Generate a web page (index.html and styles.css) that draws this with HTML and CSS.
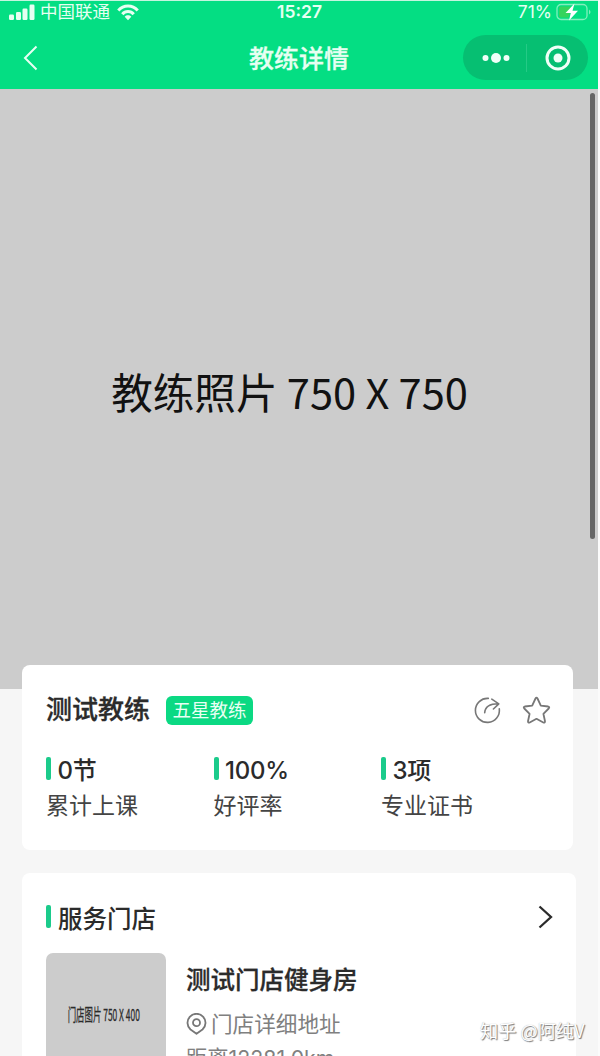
FILE: index.html
```html
<!DOCTYPE html>
<html lang="zh-CN">
<head>
<meta charset="utf-8">
<title>教练详情</title>
<link rel="stylesheet" href="styles.css">
</head>
<body>
<div class="screen">
  <header class="header">
    <div class="status">
      <div class="status-left">
        <svg class="signal" width="26" height="16" viewBox="0 0 26 16" fill="#e6fff2"><rect x="0" y="10.500" width="5" height="5.500" rx="1.200"/><rect x="7" y="8" width="5" height="8" rx="1.200"/><rect x="13.500" y="4.500" width="5" height="11.500" rx="1.200"/><rect x="20.500" y="0.500" width="5" height="15.500" rx="1.200"/></svg>
        <span class="carrier">中国联通</span>
        <svg width="22" height="17" viewBox="0 0 22 17"><g fill="none" stroke="#e6fff2" stroke-width="3"><path d="M1.300 6.500C6.500 .500 15.500 .500 20.700 6.500"/><path d="M5.300 10.300C8.300 6.700 13.700 6.700 16.700 10.300"/></g><path d="M7.700 12.700C9.500 10.800 12.500 10.800 14.300 12.700L11 16.300Z" fill="#e6fff2"/></svg>
      </div>
      <span class="clock">15:27</span>
      <div class="status-right">
        <span class="percent">71%</span>
        <svg width="36" height="18" viewBox="0 0 36 18"><rect x="1" y="1.500" width="30" height="15" rx="4" fill="none" stroke="#82efbd" stroke-width="1.300"/><path d="M5 3.500H15L11 9.500H14L12.500 14.500H5Q3 14.500 3 12.500V5.500Q3 3.500 5 3.500Z" fill="#36d45c"/><path d="M18.500 .500L9.500 10H14.800L13 17.500L22 7.700H16.500Z" fill="#fff"/><path d="M33 6.500Q36 9 33 11.500Z" fill="#82efbd"/></svg>
      </div>
    </div>
    <div class="nav">
      <svg class="back" width="15" height="26" viewBox="0 0 15 26" fill="none" stroke="#e8fff4" stroke-width="2"><path d="M13.500 1.500L2 13L13.500 24.500"/></svg>
      <h1 class="title">教练详情</h1>
      <div class="capsule">
        <svg width="28" height="12" viewBox="0 0 28 12" fill="#f0fff8"><circle cx="3.500" cy="6" r="3"/><circle cx="14" cy="6" r="5"/><circle cx="24.500" cy="6" r="3"/></svg>
        <span class="divider"></span>
        <svg width="26" height="26" viewBox="0 0 26 26"><circle cx="13" cy="13" r="11" fill="none" stroke="#f0fff8" stroke-width="3"/><circle cx="13" cy="13" r="4.500" fill="#f0fff8"/></svg>
      </div>
    </div>
  </header>
  <div class="photo"><span class="photo-text">教练照片 750 X 750</span></div>
  <main class="content">
    <section class="card coach">
      <div class="coach-head">
        <h2 class="name">测试教练</h2>
        <span class="tag">五星教练</span>
        <div class="actions">
          <svg width="27" height="27" viewBox="0 0 27 27" fill="none" stroke="#777" stroke-width="1.600" stroke-linecap="round" stroke-linejoin="round"><path d="M14.300 1.400A12 12 0 1 0 25.300 11.800"/><path d="M10.700 15.800C11 10.500 15.500 6.800 24.500 6.800M17.800 2.200L24.800 6.800L19.400 12"/></svg>
          <svg width="29" height="29" viewBox="0 0 29 29" fill="none" stroke="#777" stroke-width="1.800" stroke-linejoin="round"><path d="M13.500 2.500Q14.500 .800 15.500 2.500L18.800 9.600L26.200 10.500Q28 11 26.700 12.500L21.400 17.800L23 25.300Q23 27.200 21.300 26.500L14.500 22.800L7.700 26.500Q6 27.200 6 25.300L7.600 17.800L2.300 12.500Q1 11 2.800 10.500L10.200 9.600Z"/></svg>
        </div>
      </div>
      <div class="stats">
        <div class="stat"><div class="value"><i class="bar"></i>0节</div><div class="label">累计上课</div></div>
        <div class="stat"><div class="value"><i class="bar"></i>100%</div><div class="label">好评率</div></div>
        <div class="stat"><div class="value"><i class="bar"></i>3项</div><div class="label">专业证书</div></div>
      </div>
    </section>
    <section class="card store">
      <div class="store-head">
        <i class="bar"></i><h2 class="store-heading">服务门店</h2>
        <svg class="more" width="16" height="24" viewBox="0 0 16 24" fill="none" stroke="#2b2b2b" stroke-width="2.300"><path d="M2.500 1.500L14 12L2.500 22.500"/></svg>
      </div>
      <div class="store-row">
        <div class="thumb"><span class="thumb-text">门店图片 750 X 400</span></div>
        <div class="store-info">
          <h3 class="store-name">测试门店健身房</h3>
          <div class="address"><svg width="21" height="22" viewBox="0 0 20 22" fill="none" stroke="#777" stroke-width="1.800"><path d="M10 20.800L4 16.500A9 9 0 1 1 16 16.500Z" stroke-linejoin="round"/><circle cx="10" cy="9.700" r="3.500"/></svg><span>门店详细地址</span></div>
          <div class="distance">距离12281.0km</div>
        </div>
      </div>
    </section>
  </main>
  <div class="scrollbar"></div>
  <div class="watermark">知乎 @阿纯V</div>
</div>
</body>
</html>
```
FILE: styles.css
```css
* { box-sizing: border-box; margin: 0; padding: 0; }
body {
  width: 600px; height: 1056px; overflow: hidden; background: #fbfbfb;
  font-family: Inter, "Noto Sans CJK SC", sans-serif; color: #2b2b2b;
}
svg { display: block; flex: none; }
.screen { position: relative; width: 598px; height: 1056px; overflow: hidden; background: #f6f6f6; }
.header { height: 89px; background: #04de83; border-top: 1px solid #c5f5df; color: #e6fff2; }
.status { display: grid; grid-template-columns: 1fr auto 1fr; align-items: center; height: 22px; padding: 0 6px 0 7px; }
.status-left { display: flex; align-items: center; padding-left: 2px; }
.carrier { margin: 0 7px 0 5px; font-size: 17.5px; line-height: 22px; }
.clock { font-size: 17.5px; font-weight: 600; line-height: 22px; }
.status-right { display: flex; align-items: center; justify-content: flex-end; gap: 4px; }
.percent { font-size: 17.5px; line-height: 22px; }
.nav { display: grid; grid-template-columns: 226px auto 1fr; align-items: center; height: 66px; padding: 3px 10px 0 23px; }
.title { margin: 2px 0 0; font-size: 25px; font-weight: 500; line-height: 36px; -webkit-text-stroke: .3px; }
.capsule { display: flex; align-items: center; justify-self: end; width: 125px; height: 45px; padding: 0 16px 0 19px; border-radius: 23px; background: #06bf72; }
.divider { width: 1px; height: 28px; margin: 0 18px 0 16px; background: #25ca86; }
.photo { display: flex; align-items: center; justify-content: center; height: 600px; padding: 4px 19px 0 0; background: #ccc; }
.photo-text { color: #111; font: 400 41.6px/60px "Noto Sans CJK SC", sans-serif; white-space: nowrap; }
.content { position: relative; display: flex; flex-direction: column; gap: 23px; margin: -24px 22px 0 22px; }
.card { background: #fff; border-radius: 8px; }
.coach { width: 551px; height: 185px; padding: 27px 22px 0 24px; }
.coach-head { display: flex; align-items: center; height: 36px; }
.name { font-size: 26px; font-weight: 500; line-height: 36px; -webkit-text-stroke: .3px; }
.tag { margin: 1px 0 0 16px; width: 87px; height: 29px; border-radius: 6px; background: #0bd983; color: #e9fff4; font-size: 18.5px; line-height: 28px; text-align: center; }
.actions { display: flex; align-items: center; gap: 21px; margin: 1px 0 0 auto; }
.stats { display: grid; grid-template-columns: repeat(3, 167.5px); margin-top: 25px; }
.value { display: flex; align-items: center; height: 36px; font-size: 24px; font-weight: 500; line-height: 36px; letter-spacing: -.2px; }
.bar { width: 5px; height: 23px; border-radius: 2px; background: #1bcb8b; flex: none; }
.value .bar { margin: 0 6.500px 5px 0; }
.label { font-size: 23px; line-height: 34px; color: #444; }
.store { width: 554px; height: 230px; padding: 28px 23px 0 24px; }
.store-head { display: flex; align-items: center; height: 36px; }
.store-heading { font-size: 24.5px; font-weight: 500; line-height: 36px; }
.store-head .bar { margin: 0 7px 6px 0; }
.more { margin: 0 0 5px auto; }
.store-row { display: flex; gap: 20px; margin-top: 16px; }
.thumb { display: flex; align-items: center; justify-content: center; width: 120px; height: 120px; border-radius: 7px; background: #ccc; }
.thumb-text { flex: none; margin: 1px 4px 0 0; font: 400 16.500px/24px "Noto Sans CJK SC", sans-serif; transform: scaleX(.51); white-space: nowrap; -webkit-text-stroke: .3px; }
.store-info { padding-top: 9px; }
.store-name { font-size: 24.5px; font-weight: 500; line-height: 36px; -webkit-text-stroke: .3px; }
.address { display: flex; align-items: center; gap: 4px; margin-top: 9px; color: #808080; font-size: 21.6px; line-height: 34px; }
.distance { color: #808080; font-size: 21.3px; line-height: 34px; }
.scrollbar { position: absolute; top: 93px; right: 3px; width: 5px; height: 446px; border-radius: 3px; background: #666; }
.watermark { position: absolute; left: 480px; top: 1017px; color: #fff; font: 400 18.200px/26px "Noto Sans CJK SC", sans-serif; white-space: nowrap; text-shadow: 1px 1px 1px #777, 0 0 1px #aaa; }
```
